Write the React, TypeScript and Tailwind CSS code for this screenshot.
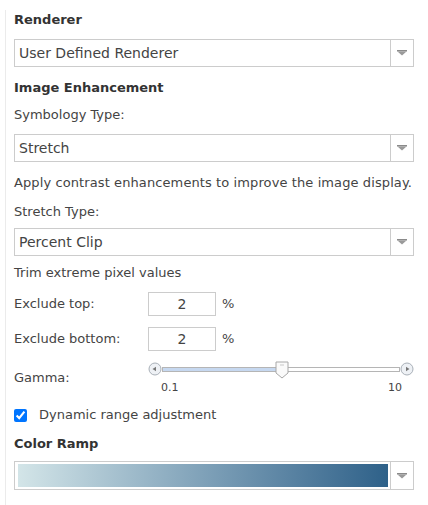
import React from 'react';

const font = { fontFamily: '"DejaVu Sans", Verdana, sans-serif' };

function Arrow() {
  return (
    <svg width="10" height="6" viewBox="0 0 10 6">
      <rect x="0" y="0" width="10" height="1.5" fill="#8a8a8a" />
      <path d="M0.5 1.5 L9.5 1.5 L5 5.5 Z" fill="#9a9a9a" />
    </svg>
  );
}

function Select({ value, className = '' }: { value: string; className?: string }) {
  return (
    <div className={`flex h-[28px] border border-[#cccccc] bg-white ${className}`}>
      <div className="flex-1 flex items-center pl-[4px] text-[14px] text-[#444]">{value}</div>
      <div className="w-[23px] border-l border-[#cccccc] flex items-center justify-center">
        <Arrow />
      </div>
    </div>
  );
}

function NumberRow({ label, value, className = '' }: { label: string; value: string; className?: string }) {
  return (
    <div className={`flex items-center h-[24px] ${className}`}>
      <div className="w-[134px] text-[13px] text-[#444]">{label}</div>
      <div className="w-[68px] h-[24px] border border-[#cccccc] flex items-center justify-center text-[14px] text-[#444]">
        {value}
      </div>
      <div className="ml-[6px] text-[13px] text-[#444]">%</div>
    </div>
  );
}

function CircleBtn({ dir }: { dir: 'l' | 'r' }) {
  return (
    <svg width="14" height="14" viewBox="0 0 14 14">
      <circle cx="7" cy="7" r="6" fill="#eef1f5" stroke="#a9b0b8" />
      {dir === 'l' ? (
        <path d="M4.5 7 L8 4.8 L8 9.2 Z" fill="#777" />
      ) : (
        <path d="M9.5 7 L6 4.8 L6 9.2 Z" fill="#777" />
      )}
    </svg>
  );
}

export default function App() {
  return (
    <div className="bg-white w-[428px] h-[505px] pt-[10px] pl-[5px]" style={font}>
      <div className="border-l border-[#ebebeb] h-full pl-[8px] pr-[14px]">
        <div className="h-[20px] flex items-center text-[13px] font-bold text-[#333]">Renderer</div>
        <Select value="User Defined Renderer" className="mt-[9px]" />

        <div className="mt-[11px] h-[20px] flex items-center text-[13px] font-bold text-[#333]">Image Enhancement</div>
        <div className="mt-[7px] h-[20px] flex items-center text-[13px] text-[#444]">Symbology Type:</div>
        <Select value="Stretch" className="mt-[9px]" />

        <div className="mt-[11px] h-[20px] flex items-center text-[13px] text-[#444] whitespace-nowrap tracking-[0.1px]">
          Apply contrast enhancements to improve the image display.
        </div>
        <div className="mt-[9px] h-[20px] flex items-center text-[13px] text-[#444]">Stretch Type:</div>
        <Select value="Percent Clip" className="mt-[6px]" />

        <div className="mt-[7px] h-[20px] flex items-center text-[13px] text-[#444]">Trim extreme pixel values</div>
        <NumberRow label="Exclude top:" value="2" className="mt-[9px]" />
        <NumberRow label="Exclude bottom:" value="2" className="mt-[11px]" />

        {/* Gamma slider */}
        <div className="mt-[9px] flex h-[36px]">
          <div className="w-[134px] pt-[8px] text-[13px] text-[#444]">Gamma:</div>
          <div className="flex-1 flex flex-col pt-[1px]">
            <div className="flex items-center h-[18px]">
              <CircleBtn dir="l" />
              <div className="relative flex-1 h-[5px] border border-[#b5b5b5] bg-white">
                <div className="h-full w-[50%] bg-[#c6d8f0]" />
                <svg
                  className="absolute left-[calc(50%-6px)] top-[-7px]"
                  width="14"
                  height="18"
                  viewBox="0 0 14 18"
                >
                  <path d="M1 1 H13 V12 L7 17 L1 12 Z" fill="#fafafa" stroke="#a8a8a8" />
                  <path d="M5 4 H9" stroke="#c8c8c8" />
                </svg>
              </div>
              <CircleBtn dir="r" />
            </div>
            <div className="flex justify-between text-[11px] text-[#444] pl-[13px] pr-[12px] mt-[2px]">
              <span>0.1</span>
              <span>10</span>
            </div>
          </div>
        </div>

        <div className="mt-[9px] h-[20px] flex items-center">
          <input type="checkbox" checked readOnly className="w-[13px] h-[13px] m-0" />
          <span className="ml-[12px] text-[13px] text-[#444]">Dynamic range adjustment</span>
        </div>

        <div className="mt-[9px] h-[20px] flex items-center text-[13px] font-bold text-[#333]">Color Ramp</div>

        <div className="mt-[7px] flex h-[29px] border border-[#cccccc] bg-white">
          <div className="flex-1 p-[2px] pl-[3px] pr-[2px]">
            <div className="h-full bg-gradient-to-r from-[#d3e5e8] to-[#2e6189]" />
          </div>
          <div className="w-[23px] border-l border-[#cccccc] flex items-center justify-center">
            <Arrow />
          </div>
        </div>
      </div>
    </div>
  );
}
